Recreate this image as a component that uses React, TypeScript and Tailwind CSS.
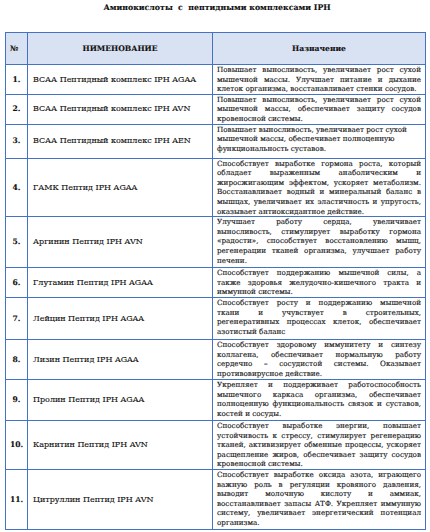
import React from 'react';

interface Row {
  num: string;
  name: string;
  lines: string[];
  h: number;
  justify?: boolean;
}

const rows: Row[] = [
  {
    num: '1.',
    name: 'ВСАА Пептидный комплекс IPH AGAA',
    h: 28,
    justify: true,
    lines: [
      'Повышает выносливость, увеличивает рост сухой',
      'мышечной массы. Улучшает питание и дыхание',
      'клеток организма, восстанавливает стенки сосудов.',
    ],
  },
  {
    num: '2.',
    name: 'ВСАА Пептидный комплекс IPH AVN',
    h: 29,
    justify: true,
    lines: [
      'Повышает выносливость, увеличивает рост сухой',
      'мышечной массы, обеспечивает защиту сосудов',
      'кровеносной системы.',
    ],
  },
  {
    num: '3.',
    name: 'ВСАА Пептидный комплекс IPH AEN',
    h: 34,
    lines: [
      'Повышает выносливость, увеличивает рост сухой',
      'мышечной массы, обеспечивает полноценную',
      'функциональность суставов.',
    ],
  },
  {
    num: '4.',
    name: 'ГАМК Пептид IPH AGAA',
    h: 57,
    justify: true,
    lines: [
      'Способствует выработке гормона роста, который',
      'обладает выраженным анаболическим и',
      'жиросжигающим эффектом, ускоряет метаболизм.',
      'Восстанавливает водный и минеральный баланс в',
      'мышцах, увеличивает их эластичность и упругость,',
      'оказывает антиоксидантное действие.',
    ],
  },
  {
    num: '5.',
    name: 'Аргинин Пептид IPH AVN',
    h: 51,
    justify: true,
    lines: [
      'Улучшает работу сердца, увеличивает',
      'выносливость, стимулирует выработку гормона',
      '«радости», способствует восстановлению мышц,',
      'регенерации тканей организма, улучшает работу',
      'печени.',
    ],
  },
  {
    num: '6.',
    name: 'Глутамин Пептид IPH AGAA',
    h: 29,
    justify: true,
    lines: [
      'Способствует поддержанию мышечной силы, а',
      'также здоровья желудочно-кишечного тракта и',
      'иммунной системы.',
    ],
  },
  {
    num: '7.',
    name: 'Лейцин Пептид IPH AGAA',
    h: 42,
    justify: true,
    lines: [
      'Способствует росту и поддержанию мышечной',
      'ткани и учувствует в строительных,',
      'регенеративных процессах клеток, обеспечивает',
      'азотистый баланс',
    ],
  },
  {
    num: '8.',
    name: 'Лизин Пептид IPH AGAA',
    h: 40,
    justify: true,
    lines: [
      'Способствует здоровому иммунитету и синтезу',
      'коллагена, обеспечивает нормальную работу',
      'сердечно – сосудистой системы. Оказывает',
      'противовирусное действие.',
    ],
  },
  {
    num: '9.',
    name: 'Пролин Пептид IPH AGAA',
    h: 41,
    justify: true,
    lines: [
      'Укрепляет и поддерживает работоспособность',
      'мышечного каркаса организма, обеспечивает',
      'полноценную функциональность связок и суставов,',
      'костей и сосуды.',
    ],
  },
  {
    num: '10.',
    name: 'Карнитин Пептид IPH AVN',
    h: 49,
    justify: true,
    lines: [
      'Способствует выработке энергии, повышает',
      'устойчивость к стрессу, стимулирует регенерацию',
      'тканей, активизирует обменные процессы, ускоряет',
      'расщепление жиров, обеспечивает защиту сосудов',
      'кровеносной системы.',
    ],
  },
  {
    num: '11.',
    name: 'Цитруллин Пептид IPH AVN',
    h: 60,
    justify: true,
    lines: [
      'Способствует выработке оксида азота, играющего',
      'важную роль в регуляции кровяного давления,',
      'выводит молочную кислоту и аммиак,',
      'восстанавливает запасы АТФ. Укрепляет иммунную',
      'систему, увеличивает энергетический потенциал',
      'организма.',
    ],
  },
];

const cell = 'border border-[#4472c4] p-0';

export default function App() {
  return (
    <div className="w-[430px] h-[532px] bg-white text-[#111] font-['DejaVu_Serif','Liberation_Serif',serif] overflow-hidden [-webkit-text-stroke:0.12px]">
      <h1 className="pt-[2px] pl-[4px] text-center text-[7.8px] leading-[11px] font-bold">
        Аминокислоты&nbsp; с&nbsp; пептидными комплексами IPH
      </h1>

      <table className="mt-[19px] ml-[5px] w-[420px] border-collapse table-fixed border-[1.5px] border-[#4472c4] text-[7.2px] leading-[9.6px]">
        <colgroup>
          <col className="w-[22px]" />
          <col className="w-[185px]" />
          <col className="w-[213px]" />
        </colgroup>
        <thead>
          <tr className="h-[32px] bg-[#d9e2f3] font-bold">
            <th className={`${cell} text-left pl-[4px] text-[7.6px]`}>№</th>
            <th className={`${cell} text-center text-[7.6px]`}>НИМЕНОВАНИЕ</th>
            <th className={`${cell} text-center text-[7.6px]`}>Назначение</th>
          </tr>
        </thead>
        <tbody>
          {rows.map(row => (
            <tr key={row.num} style={{ height: row.h }}>
              <td className={`${cell} text-center align-middle font-semibold text-[7.6px]`}>{row.num}</td>
              <td className={`${cell} pl-[5px] align-middle text-[8px] whitespace-nowrap`}>{row.name}</td>
              <td className={`${cell} px-[4px] align-top`}>
                {row.lines.map((line, i) => (
                  <div
                    key={i}
                    className={
                      row.justify && i < row.lines.length - 1
                        ? 'whitespace-nowrap text-justify [text-align-last:justify]'
                        : 'whitespace-nowrap'
                    }
                  >
                    {line}
                  </div>
                ))}
              </td>
            </tr>
          ))}
        </tbody>
      </table>
    </div>
  );
}
